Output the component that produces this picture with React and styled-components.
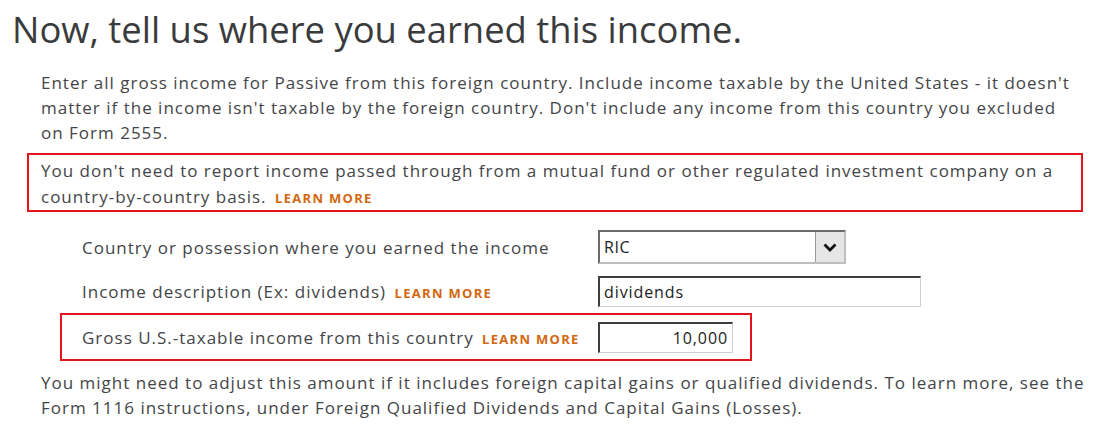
import React from 'react'
import styled, {createGlobalStyle} from 'styled-components'

const GlobalStyle = createGlobalStyle`
    body {
        margin: 0;
        background: #ffffff;
        font-family: "Open Sans", "Noto Sans", sans-serif;
        color: #444548;
    }
`

const Page = styled.div`
    width: 1102px;
    height: 443px;
    overflow: hidden;
    padding-top: 4px;
    box-sizing: border-box;
`

const Heading = styled.h1`
    margin: 0 0 0 12px;
    font-size: 36.4px;
    font-weight: 400;
    line-height: 50px;
    color: #3a3b3d;
`

const Main = styled.div`
    margin: 16px 0 0 41px;
    width: 1055px;
    font-size: 17px;
    line-height: 25px;
    letter-spacing: 1px;
`

const Para = styled.p`
    margin: 0;
    width: ${p => p.$width || 1038}px;
`

const Callout = styled.div`
    margin: 8px 0 0 -14px;
    width: 1040px;
    padding: 3px 0 0 12px;
    line-height: 26px;
    border: 2px solid #e3141c;
`

const LearnMore = styled.a`
    color: #d2670f;
    font-size: 13px;
    line-height: 1;
    font-weight: 700;
    letter-spacing: 1.3px;
    text-transform: uppercase;
    text-decoration: none;
    margin-left: 3px;
`

const Form = styled.div`
    margin: 13px 0 0 41px;
    display: flex;
    flex-direction: column;
`

const Row = styled.div`
    display: flex;
    align-items: center;
    height: 44px;
    ${p => p.$boxed && `
        box-sizing: border-box;
        margin-left: -22px;
        padding-left: 20px;
        width: 692px;
        height: 48px;
        border: 2px solid #e3141c;
    `}
`

const Label = styled.div`
    width: 516px;
    flex-shrink: 0;
`

const Field = styled.input`
    box-sizing: border-box;
    width: ${p => p.$width}px;
    height: 31px;
    padding: 0 4px;
    font-family: "Open Sans", "Noto Sans", sans-serif;
    font-size: 16px;
    letter-spacing: 0.9px;
    color: #222;
    text-align: ${p => p.$align || 'left'};
    border-style: solid;
    border-width: 2px 1px 1px 2px;
    border-color: #3e3e3e #cfcfcf #cfcfcf #3e3e3e;
    outline: none;
`

const Select = styled.div`
    box-sizing: border-box;
    width: 248px;
    height: 34px;
    display: flex;
    border-style: solid;
    border-width: 2px;
    border-color: #6a6a6a #bdbdbd #bdbdbd #6a6a6a;
`

const SelectValue = styled.div`
    flex: 1;
    padding-left: 4px;
    font-size: 16px;
    letter-spacing: 0.6px;
    line-height: 30px;
    color: #222;
`

const SelectButton = styled.div`
    width: 28px;
    background: #e6e6e6;
    border-left: 1px solid #9a9a9a;
    display: flex;
    align-items: center;
    justify-content: center;
`

const Footer = styled(Para)`
    margin-top: 9px;
`

export default function App() {
    return (
        <Page>
            <GlobalStyle/>
            <Heading>Now, tell us where you earned this income.</Heading>
            <Main>
                <Para>
                    Enter all gross income for Passive from this foreign country. Include income taxable by the United States - it doesn't matter if the income isn't taxable by the foreign country. Don't include any income from this country you excluded on Form 2555.
                </Para>
                <Callout>
                    You don't need to report income passed through from a mutual fund or other regulated investment company on a country-by-country basis. <LearnMore>Learn more</LearnMore>
                </Callout>
                <Form>
                    <Row>
                        <Label>Country or possession where you earned the income</Label>
                        <Select>
                            <SelectValue>RIC</SelectValue>
                            <SelectButton>
                                <svg width="14" height="9" viewBox="0 0 14 9">
                                    <path d="M1.5 1.5 L7 7 L12.5 1.5" fill="none" stroke="#111" strokeWidth="2.8"/>
                                </svg>
                            </SelectButton>
                        </Select>
                    </Row>
                    <Row>
                        <Label>Income description (Ex: dividends) <LearnMore>Learn more</LearnMore></Label>
                        <Field $width={323} defaultValue="dividends"/>
                    </Row>
                    <Row $boxed>
                        <Label>Gross U.S.-taxable income from this country <LearnMore>Learn more</LearnMore></Label>
                        <Field $width={135} $align="right" defaultValue="10,000"/>
                    </Row>
                </Form>
                <Footer $width={1055}>
                    You might need to adjust this amount if it includes foreign capital gains or qualified dividends. To learn more, see the Form 1116 instructions, under Foreign Qualified Dividends and Capital Gains (Losses).
                </Footer>
            </Main>
        </Page>
    )
}
